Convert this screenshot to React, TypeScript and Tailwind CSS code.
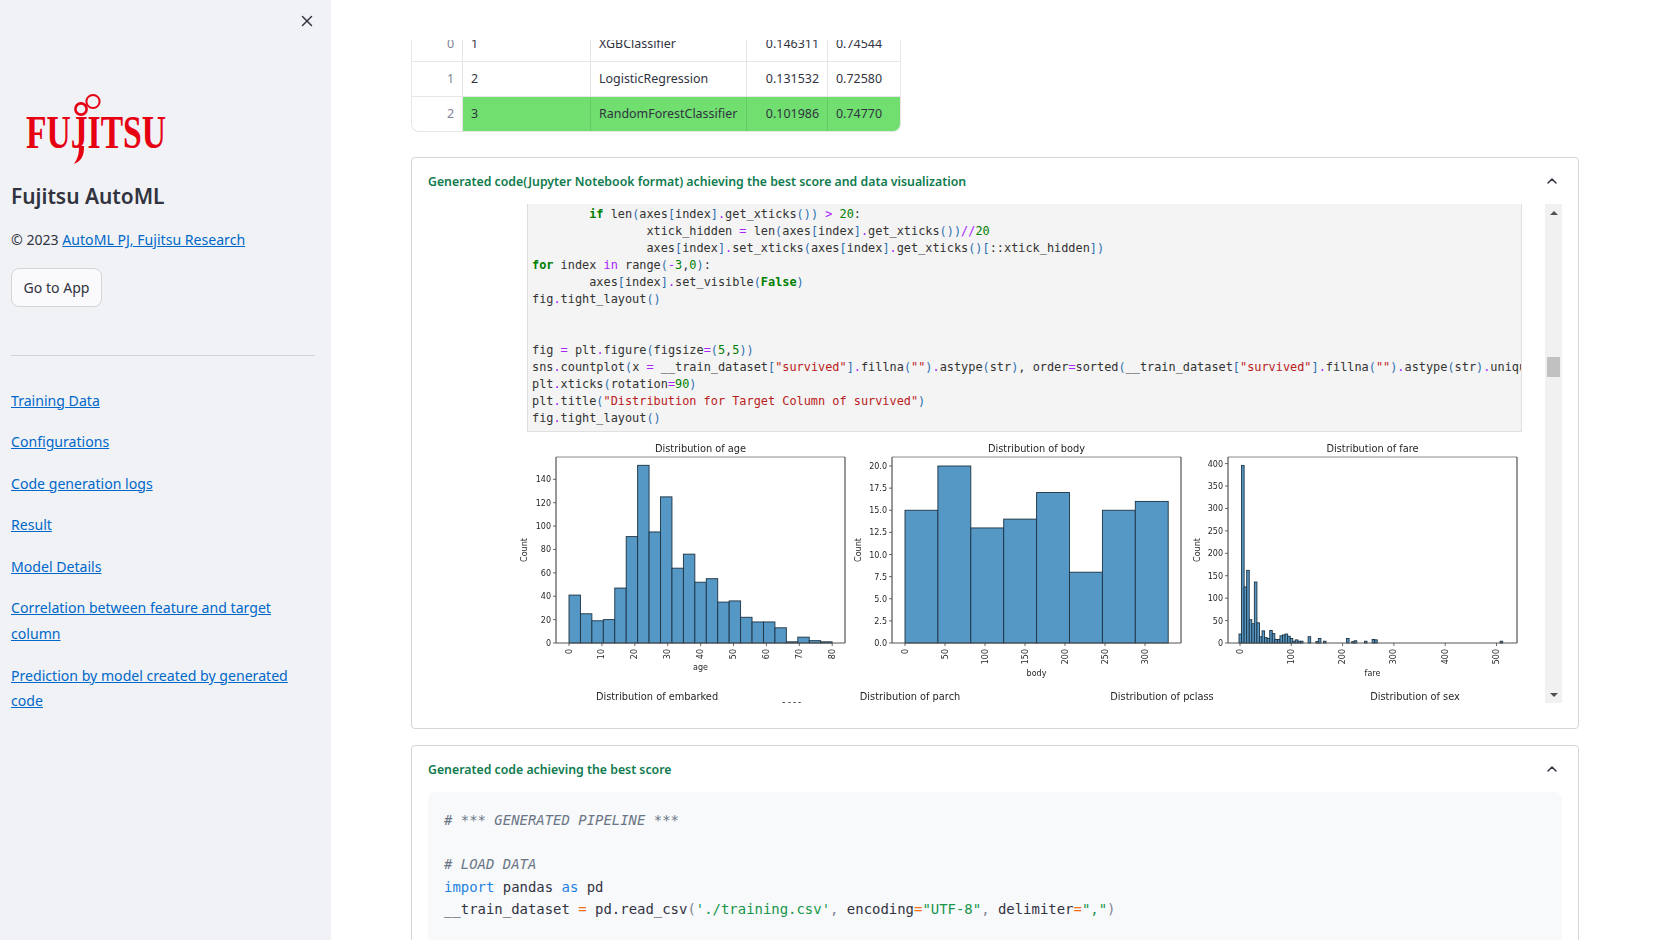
import React from 'react';
import { X, ChevronUp } from 'lucide-react';

const links = [
  'Training Data',
  'Configurations',
  'Code generation logs',
  'Result',
  'Model Details',
  'Correlation between feature and target column',
  'Prediction by model created by generated code',
];

const rows = [
  { idx: 0, rank: '1', name: 'XGBClassifier', a: '0.146311', b: '0.74544' },
  { idx: 1, rank: '2', name: 'LogisticRegression', a: '0.131532', b: '0.72580' },
  { idx: 2, rank: '3', name: 'RandomForestClassifier', a: '0.101986', b: '0.74770' },
];

const notebook = [
  '        if len(axes[index].get_xticks()) > 20:',
  '                xtick_hidden = len(axes[index].get_xticks())//20',
  '                axes[index].set_xticks(axes[index].get_xticks()[::xtick_hidden])',
  'for index in range(-3,0):',
  '        axes[index].set_visible(False)',
  'fig.tight_layout()',
  '',
  '',
  'fig = plt.figure(figsize=(5,5))',
  'sns.countplot(x = __train_dataset["survived"].fillna("").astype(str), order=sorted(__train_dataset["survived"].fillna("").astype(str).unique()))',
  'plt.xticks(rotation=90)',
  'plt.title("Distribution for Target Column of survived")',
  'fig.tight_layout()',
];

// rough python highlighter for the notebook cell
function highlight(line: string) {
  const parts = line.match(/"[^"]*"|\b(?:if|for|False)\b|\bin\b|\b\d+\b|[=.>/\-]|[()[\]]|[^"=.>/\-()[\]\d]+?(?=\b|[="'.>/\-()[\]]|$)|./g) ?? [];
  return parts.map((p, i) => {
    let cls = '';
    if (p.startsWith('"')) cls = 'text-[#ba2121]';
    else if (p === 'if' || p === 'for' || p === 'False') cls = 'text-[#008000] font-bold';
    else if (p === 'in' || /^[=.>/\-]$/.test(p)) cls = 'text-[#aa22ff]';
    else if (/^\d+$/.test(p)) cls = 'text-[#008000]';
    else if (/^[()[\]]$/.test(p)) cls = 'text-[#2f6fb0]';
    return <span key={i} className={cls}>{p}</span>;
  });
}

type HistProps = {
  title: string;
  xlabel: string;
  xlabelY: number;
  counts: number[];
  start: number;
  step: number;
  unit: number;
  yTicks: { v: number; label: string }[];
  xTicks: { x: number; label: string }[];
  countX: number;
  thin?: boolean;
};

const BASE = 205;
const LEFT = 41;
const RIGHT = 330;

function Hist({ title, xlabel, xlabelY, counts, start, step, unit, yTicks, xTicks, countX, thin }: HistProps) {
  return (
    <svg width="336" height="251" className="shrink-0 blur-[0.3px]" fontFamily="'DejaVu Sans', sans-serif">
      <text x="185.5" y="14" textAnchor="middle" fontSize="9.8" fill="#262626">{title}</text>
      {counts.map((c, i) =>
        c > 0 ? (
          <rect
            key={i}
            x={start + i * step}
            y={BASE - c * unit}
            width={step}
            height={c * unit}
            fill={thin ? '#4a87b4' : '#5597c5'}
            stroke={thin ? '#7fa9c8' : '#1d3342'}
            strokeWidth={thin ? 0.3 : 0.9}
          />
        ) : null,
      )}
      <line x1={LEFT} y1="19" x2={RIGHT} y2="19" stroke="#8a8a8a" />
      <line x1={RIGHT} y1="19" x2={RIGHT} y2={BASE} stroke="#333" />
      <line x1={LEFT} y1="19" x2={LEFT} y2={BASE} stroke="#333" />
      <line x1={LEFT} y1={BASE} x2={RIGHT} y2={BASE} stroke="#555" />
      {yTicks.map((t) => (
        <g key={t.label}>
          <line x1={LEFT - 3} y1={BASE - t.v * unit} x2={LEFT} y2={BASE - t.v * unit} stroke="#444" strokeWidth="0.8" />
          <text x={LEFT - 5} y={BASE - t.v * unit + 3} textAnchor="end" fontSize="8" fill="#262626">{t.label}</text>
        </g>
      ))}
      {xTicks.map((t) => (
        <g key={t.label}>
          <line x1={t.x} y1={BASE} x2={t.x} y2={BASE + 3} stroke="#444" strokeWidth="0.8" />
          <text transform={`translate(${t.x + 2.5},${BASE + 6}) rotate(-90)`} textAnchor="end" fontSize="8" fill="#262626">{t.label}</text>
        </g>
      ))}
      <text x="185.5" y={xlabelY} textAnchor="middle" fontSize="8" fill="#262626">{xlabel}</text>
      <text transform={`translate(${countX},112) rotate(-90)`} textAnchor="middle" fontSize="8" fill="#262626">Count</text>
    </svg>
  );
}

const fareCounts = (() => {
  const head = [20, 396, 125, 162, 52, 43, 136, 45, 14, 27, 12, 10, 28, 21, 8, 8, 16, 18, 20, 15, 10, 4, 7, 4, 4];
  const out: number[] = new Array(103).fill(0);
  head.forEach((v, i) => (out[i] = v));
  const rest: [number, number][] = [[27, 14], [30, 3], [31, 10], [33, 4], [42, 10], [44, 3], [45, 5], [49, 4], [52, 8], [53, 7], [102, 4]];
  rest.forEach(([i, v]) => (out[i] = v));
  return out;
})();

function Logo() {
  return (
    <svg width="170" height="78" viewBox="0 0 170 78" className="block">
      <circle cx="70" cy="21" r="5.6" fill="none" stroke="#e60012" strokeWidth="2.6" />
      <circle cx="82" cy="13.5" r="6.6" fill="none" stroke="#e60012" strokeWidth="2" />
      <path d="M68 58 L73 58 C73 66 72 72 63 76 C67 70 68 66 68 58 Z" fill="#e60012" />
      <text x="15" y="60" fontFamily="'Liberation Serif', serif" fontWeight="700" fontSize="46" fill="#e60012" textLength="140" lengthAdjust="spacingAndGlyphs">FUJITSU</text>
    </svg>
  );
}

function App() {
  return (
    <div className="flex h-screen overflow-hidden bg-white font-['Noto_Sans',sans-serif] text-[#31333f]">
      {/* Sidebar */}
      <aside className="relative w-[331px] shrink-0 bg-[#f0f2f6] pl-[11px] pr-[16px]">
        <X size={18} strokeWidth={2} className="absolute left-[298px] top-[12px] text-[#31333f]" />
        <div className="pt-[88px]">
          <Logo />
        </div>
        <h2 className="mt-[13px] text-[20.9px] font-semibold leading-[34px]">Fujitsu AutoML</h2>
        <p className="mt-[14px] text-[14.1px] leading-[26px]">
          © 2023 <a href="#" className="text-[#0068c9] underline">AutoML PJ, Fujitsu Research</a>
        </p>
        <button className="mt-[15px] block h-[39px] w-[91px] rounded-lg border border-[#d4d5d9] bg-[#fafafc] text-[14.1px]">Go to App</button>
        <hr className="mt-[48px] border-0 border-t border-[#cfd1d6]" />
        <nav className="mt-[31.5px] flex w-[304px] flex-col gap-4">
          {links.map((l) => (
            <a key={l} href="#" className="text-[14.1px] leading-[25.6px] text-[#0068c9] underline">{l}</a>
          ))}
        </nav>
      </aside>

      {/* Main */}
      <main className="min-w-0 flex-1 pl-[80px] pt-[40px]">
        <div className="h-[92px] w-[490px] overflow-hidden rounded-b-lg border-x border-b border-[#e6e6e6]">
          <div className="-mt-[13px] text-[12.45px]">
            {rows.map((r) => (
              <div key={r.idx} className="flex h-[35px] border-b border-[#e6e6e6] leading-[33px] last:border-b-0">
                <div className="w-[51px] border-r border-[#e6e6e6] pr-2 text-right text-[#808495]">{r.idx}</div>
                <div className={`flex flex-1 ${r.idx === 2 ? 'bg-[#70df70]' : ''}`}>
                  <div className="w-[128px] border-r border-black/10 pl-2">{r.rank}</div>
                  <div className="w-[156px] border-r border-black/10 pl-2">{r.name}</div>
                  <div className="w-[81px] border-r border-black/10 pr-2 text-right">{r.a}</div>
                  <div className="flex-1 pl-2">{r.b}</div>
                </div>
              </div>
            ))}
          </div>
        </div>

        {/* Notebook expander */}
        <section className="mt-[25px] h-[572px] w-[1168px] rounded-[4px] border border-[#d6d6d8] px-4">
          <div className="flex h-[46px] items-center justify-between">
            <span className="pt-[3px] text-[12.3px] font-semibold text-[#0f7b4e]">Generated code(Jupyter Notebook format) achieving the best score and data visualization</span>
            <ChevronUp size={16} strokeWidth={2.2} className="mr-[2px] text-[#31333f]" />
          </div>
          <div className="flex h-[499px] overflow-hidden">
            <div className="w-[1117px] shrink-0 overflow-hidden">
              <div className="ml-[99px] h-[228px] w-[995px] overflow-hidden border-x border-b border-[#e0e0e0] border-l-[#dddddd] bg-[#f4f4f4] pl-[4px] pt-[2px]">
                <pre className="font-['DejaVu_Sans_Mono',monospace] text-[11.88px] leading-[17px] text-[#333333]">
                  {notebook.map((l, i) => (
                    <div key={i} className="h-[17px] whitespace-pre">{highlight(l)}</div>
                  ))}
                </pre>
              </div>
              <div className="ml-[87px] mt-[6px] flex">
                <Hist
                  title="Distribution of age"
                  xlabel="age"
                  xlabelY={232}
                  counts={[41, 25, 19, 20, 47, 91, 152, 95, 125, 64, 76, 52, 55, 35, 36, 22, 18, 18, 13, 1, 5, 2, 1]}
                  start={54}
                  step={11.44}
                  unit={1.169}
                  yTicks={[0, 20, 40, 60, 80, 100, 120, 140].map((v) => ({ v, label: String(v) }))}
                  xTicks={[0, 10, 20, 30, 40, 50, 60, 70, 80].map((v) => ({ x: 54 + v * 3.29, label: String(v) }))}
                  countX={12}
                />
                <Hist
                  title="Distribution of body"
                  xlabel="body"
                  xlabelY={238}
                  counts={[15, 20, 13, 14, 17, 8, 15, 16]}
                  start={54}
                  step={32.9}
                  unit={8.85}
                  yTicks={[0, 2.5, 5, 7.5, 10, 12.5, 15, 17.5, 20].map((v) => ({ v, label: v.toFixed(1) }))}
                  xTicks={[0, 50, 100, 150, 200, 250, 300].map((v) => ({ x: 54 + v * 0.8, label: String(v) }))}
                  countX={10}
                />
                <Hist
                  title="Distribution of fare"
                  xlabel="fare"
                  xlabelY={238}
                  counts={fareCounts}
                  start={52}
                  step={2.56}
                  unit={0.4485}
                  yTicks={[0, 50, 100, 150, 200, 250, 300, 350, 400].map((v) => ({ v, label: String(v) }))}
                  xTicks={[0, 100, 200, 300, 400, 500].map((v) => ({ x: 53 + v * 0.513, label: String(v) }))}
                  countX={13}
                />
              </div>
              <svg width="1117" height="14" className="block blur-[0.3px]" fontFamily="'DejaVu Sans', sans-serif" fontSize="9.8" fill="#262626" textAnchor="middle">
                <text x="229" y="11">Distribution of embarked</text>
                <text x="482" y="11">Distribution of parch</text>
                <text x="734" y="11">Distribution of pclass</text>
                <text x="987" y="11">Distribution of sex</text>
                <text x="364" y="19.5" fontSize="8">1000</text>
              </svg>
            </div>
            {/* scrollbar */}
            <div className="flex w-[17px] shrink-0 flex-col items-center bg-[#f1f1f1]">
              <div className="mt-[7px] h-0 w-0 border-x-[4px] border-b-[4px] border-x-transparent border-b-[#505050]" />
              <div className="mt-[142px] h-[20px] w-[13px] bg-[#c1c1c1]" />
              <div className="mt-[316px] h-0 w-0 border-x-[4px] border-t-[4px] border-x-transparent border-t-[#505050]" />
            </div>
          </div>
        </section>

        {/* Pipeline expander */}
        <section className="mt-[16px] w-[1168px] rounded-[4px] border border-[#d6d6d8] px-4">
          <div className="flex h-[46px] items-center justify-between">
            <span className="pt-[3px] text-[12.3px] font-semibold text-[#0f7b4e]">Generated code achieving the best score</span>
            <ChevronUp size={16} strokeWidth={2.2} className="mr-[2px] text-[#31333f]" />
          </div>
          <pre className="h-[200px] rounded-lg bg-[#f8f9fb] pl-[16px] pt-[16.5px] font-['DejaVu_Sans_Mono',monospace] text-[13.95px] leading-[22.4px] text-[#31333f]">
            <div className="italic text-[#6b7686]"># *** GENERATED PIPELINE ***</div>
            <div className="h-[22.4px]" />
            <div className="italic text-[#6b7686]"># LOAD DATA</div>
            <div>
              <span className="text-[#1f82e0]">import</span> pandas <span className="text-[#1f82e0]">as</span> pd
            </div>
            <div>
              __train_dataset <span className="text-[#f0701a]">=</span> pd.read_csv<span className="text-[#808495]">(</span>
              <span className="text-[#17964a]">'./training.csv'</span><span className="text-[#808495]">,</span> encoding<span className="text-[#f0701a]">=</span>
              <span className="text-[#17964a]">"UTF-8"</span><span className="text-[#808495]">,</span> delimiter<span className="text-[#f0701a]">=</span>
              <span className="text-[#17964a]">","</span><span className="text-[#808495]">)</span>
            </div>
          </pre>
        </section>
      </main>
    </div>
  );
}

export default App;
